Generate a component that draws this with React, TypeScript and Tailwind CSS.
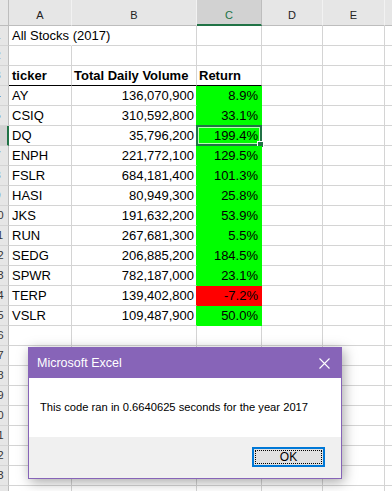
import React from "react";

type RowData = {
  n: number;
  a?: string;
  b?: string;
  c?: string;
  fill?: "g" | "r";
  bold?: boolean;
  line?: boolean;
  overflowA?: boolean;
  sel?: boolean;
};

const data: [string, string, string, "g" | "r"][] = [
  ["AY", "136,070,900", "8.9%", "g"],
  ["CSIQ", "310,592,800", "33.1%", "g"],
  ["DQ", "35,796,200", "199.4%", "g"],
  ["ENPH", "221,772,100", "129.5%", "g"],
  ["FSLR", "684,181,400", "101.3%", "g"],
  ["HASI", "80,949,300", "25.8%", "g"],
  ["JKS", "191,632,200", "53.9%", "g"],
  ["RUN", "267,681,300", "5.5%", "g"],
  ["SEDG", "206,885,200", "184.5%", "g"],
  ["SPWR", "782,187,000", "23.1%", "g"],
  ["TERP", "139,402,800", "-7.2%", "r"],
  ["VSLR", "109,487,900", "50.0%", "g"],
];

const rows: RowData[] = [
  { n: 1, a: "All Stocks (2017)", overflowA: true },
  { n: 2 },
  { n: 3, a: "ticker", b: "Total Daily Volume", c: "Return", bold: true, line: true },
  ...data.map((d, i) => ({ n: 4 + i, a: d[0], b: d[1], c: d[2], fill: d[3], sel: i === 2 })),
  ...Array.from({ length: 9 }, (_, i) => ({ n: 16 + i })),
];

function RowHeader({ n, sel }: { n: number; sel?: boolean }) {
  return (
    <div
      className={
        "w-[9px] shrink-0 h-full overflow-hidden flex justify-end border-b border-b-[#d4d4d4] leading-[19px] text-[11px] font-normal " +
        (sel
          ? "bg-[#d2d2d2] border-r-2 border-r-[#217346] text-[#217346]"
          : "bg-[#e6e6e6] border-r border-r-[#bdbdbd] text-[#333]")
      }
    >
      <div className="w-[21px] shrink-0 text-center">{n}</div>
    </div>
  );
}

function BodyRow({ r }: { r: RowData }) {
  const bottomA = r.line ? "border-b-black" : "border-b-[#d4d4d4]";
  const bRight =
    r.fill === "g" ? "border-r-[#00ff00]" : r.fill === "r" ? "border-r-[#ff0000]" : "border-r-[#d4d4d4]";
  const cFill =
    r.fill === "g"
      ? "bg-[#00ff00] border-r-[#00ff00] border-b-[#00ff00]"
      : r.fill === "r"
      ? "bg-[#ff0000] border-r-[#ff0000] border-b-[#ff0000]"
      : r.line
      ? "border-r-[#d4d4d4] border-b-black"
      : "border-r-[#d4d4d4] border-b-[#d4d4d4]";
  return (
    <div className={"flex h-[20px] text-[13px] text-black " + (r.bold ? "font-bold" : "")}>
      <RowHeader n={r.n} sel={r.sel} />
      <div
        className={
          "w-[63px] shrink-0 h-full border-b border-r pl-[3px] whitespace-nowrap leading-[19px] relative z-10 " +
          bottomA +
          " " +
          (r.overflowA ? "border-r-white" : "border-r-[#d4d4d4]")
        }
      >
        {r.a}
      </div>
      <div
        className={
          "w-[125px] shrink-0 h-full border-b border-r leading-[19px] whitespace-nowrap " +
          bottomA +
          " " +
          bRight +
          " " +
          (r.bold ? "pl-[2px] text-left" : "pr-[2px] text-right")
        }
      >
        {r.b}
      </div>
      <div
        className={
          "w-[65px] shrink-0 h-full border-b border-r leading-[19px] whitespace-nowrap relative " +
          cFill +
          " " +
          (r.bold ? "pl-[2px] text-left" : "pr-[3px] text-right")
        }
      >
        {r.c}
        {r.sel && (
          <div className="absolute -left-[1px] -top-[1px] w-[66px] h-[21px] border-2 border-[#217346]">
            <div className="absolute inset-0 border border-white/70" />
            <div className="absolute -right-[4px] -bottom-[4px] w-[7px] h-[7px] bg-[#217346] border border-white" />
          </div>
        )}
      </div>
      <div className="w-[61px] shrink-0 h-full border-b border-r border-[#d4d4d4]" />
      <div className="w-[62px] shrink-0 h-full border-b border-r border-[#d4d4d4]" />
      <div className="flex-1 h-full border-b border-[#d4d4d4]" />
    </div>
  );
}

function ColHeader({ label, w, sel }: { label: string; w: string; sel?: boolean }) {
  return (
    <div
      className={
        w +
        " shrink-0 h-full flex justify-center pt-[6px] leading-[19px] text-[11px] " +
        (sel
          ? "bg-[#d2d2d2] border-b-2 border-b-[#217346] text-[#217346] border-r border-r-[#bdbdbd]"
          : "bg-[#e6e6e6] border-b border-b-[#bdbdbd] text-[#222] border-r border-r-[#f2f2f2]")
      }
    >
      {label}
    </div>
  );
}

export default function App() {
  return (
    <div className="relative w-[392px] h-[491px] overflow-hidden bg-white font-['Liberation_Sans',Arial,sans-serif]">
      <div className="flex h-[26px]">
        <div className="w-[9px] shrink-0 h-full bg-[#e6e6e6] border-r border-b border-[#bdbdbd]" />
        <ColHeader label="A" w="w-[63px]" />
        <ColHeader label="B" w="w-[125px]" />
        <ColHeader label="C" w="w-[65px]" sel />
        <ColHeader label="D" w="w-[61px]" />
        <ColHeader label="E" w="w-[62px]" />
        <div className="flex-1 h-full bg-[#e6e6e6] border-b border-b-[#bdbdbd]" />
      </div>
      {rows.map((r) => (
        <BodyRow key={r.n} r={r} />
      ))}

      <div className="absolute left-[28px] top-[347px] w-[314px] h-[132px] border border-[#8764b8] bg-white flex flex-col shadow-[2px_3px_12px_rgba(0,0,0,0.35)] z-20">
        <div className="h-[30px] shrink-0 bg-[#8764b8] flex items-center justify-between pl-[8px] pr-[11px] text-white text-[12.5px]">
          <span>Microsoft Excel</span>
          <svg width="11" height="11" viewBox="0 0 11 11">
            <path d="M0.5 0.5 L10.5 10.5 M10.5 0.5 L0.5 10.5" stroke="white" strokeWidth="1.1" fill="none" />
          </svg>
        </div>
        <div className="h-[59px] shrink-0 flex items-center pl-[11px] text-[11.2px] text-black whitespace-nowrap">
          This code ran in 0.6640625 seconds for the year 2017
        </div>
        <div className="flex-1 bg-[#f0f0f0] flex justify-end items-start pt-[10px] pr-[16px]">
          <div className="w-[73px] h-[20px] border-2 border-[#0078d7] bg-[#e1e1e1] p-[1px]">
            <div className="w-full h-full border border-dotted border-black flex items-center justify-center text-[12px] text-black leading-none">
              OK
            </div>
          </div>
        </div>
      </div>
    </div>
  );
}
